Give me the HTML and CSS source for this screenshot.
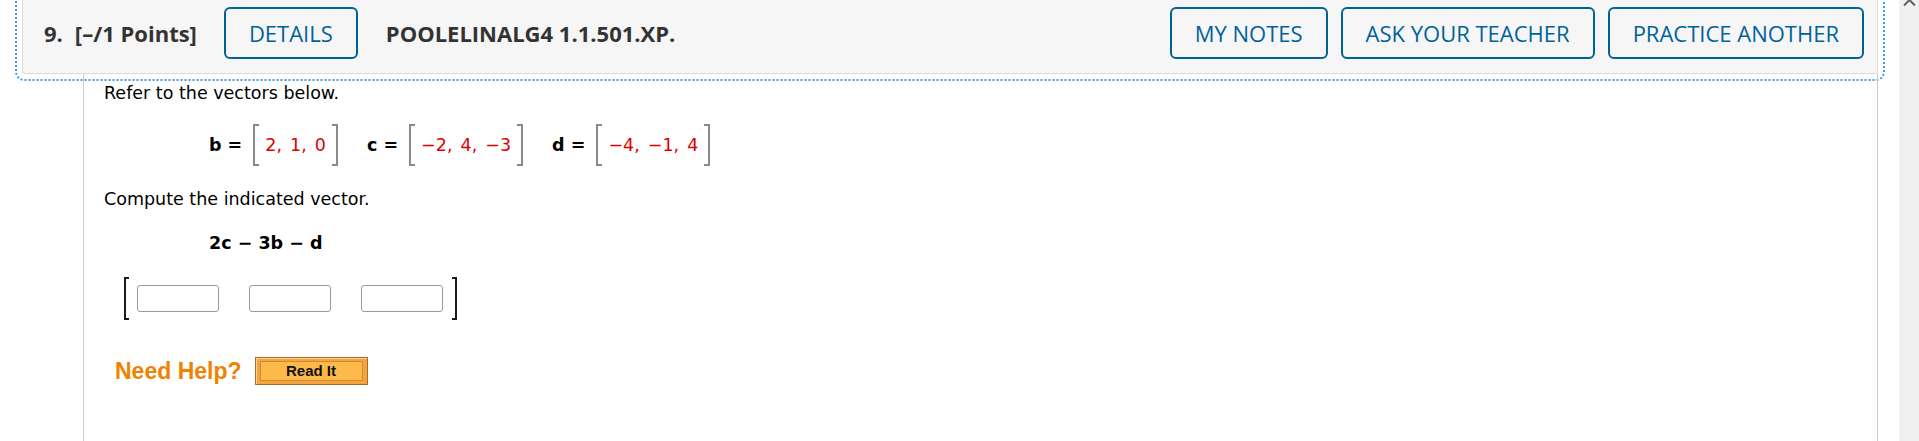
FILE: index.html
```html
<!DOCTYPE html>
<html lang="en">
<head>
    <meta charset="UTF-8">
    <meta name="viewport" content="width=device-width, initial-scale=1.0">
    <title>Question 9</title>
    <link rel="stylesheet" href="styles.css">
</head>
<body>
    <div class="page">
        <!-- Question header bar -->
        <div class="question-header">
            <div class="question-title">
                <span class="question-number">9.</span>
                <span class="question-points">[&ndash;/1 Points]</span>
                <button class="header-button">DETAILS</button>
                <span class="question-code">POOLELINALG4 1.1.501.XP.</span>
            </div>
            <div class="header-actions">
                <button class="header-button">MY NOTES</button>
                <button class="header-button">ASK YOUR TEACHER</button>
                <button class="header-button">PRACTICE ANOTHER</button>
            </div>
        </div>

        <!-- Question body -->
        <div class="question-body">
            <p class="prompt">Refer to the vectors below.</p>

            <div class="vector-row">
                <span class="vector-label">b =</span>
                <span class="bracket bracket-left"></span>
                <span class="vector-values">2, 1, 0</span>
                <span class="bracket bracket-right"></span>

                <span class="vector-label">c =</span>
                <span class="bracket bracket-left"></span>
                <span class="vector-values">&minus;2, 4, &minus;3</span>
                <span class="bracket bracket-right"></span>

                <span class="vector-label">d =</span>
                <span class="bracket bracket-left"></span>
                <span class="vector-values">&minus;4, &minus;1, 4</span>
                <span class="bracket bracket-right"></span>
            </div>

            <p class="prompt prompt-second">Compute the indicated vector.</p>

            <div class="expression">2c &minus; 3b &minus; d</div>

            <div class="answer-row">
                <span class="answer-bracket answer-bracket-left"></span>
                <input type="text" class="answer-input">
                <input type="text" class="answer-input">
                <input type="text" class="answer-input">
                <span class="answer-bracket answer-bracket-right"></span>
            </div>

            <div class="help-row">
                <span class="need-help">Need Help?</span>
                <button class="read-it"><span>Read It</span></button>
            </div>
        </div>
    </div>

    <!-- Window scrollbar -->
    <div class="scrollbar">
        <svg width="20" height="8" viewBox="0 0 20 8">
            <polyline points="5,7.5 10.5,2 16,7.5" fill="none" stroke="#5f5f5f" stroke-width="2"/>
        </svg>
    </div>
</body>
</html>
```

FILE: styles.css
```css
body {
    margin: 0;
    height: 100vh;
    display: flex;
    background-color: white;
    overflow: hidden;
}

.page {
    flex: 1;
    display: flex;
    flex-direction: column;
    padding: 0 21px 0 22px;
}

.question-header {
    display: flex;
    align-items: center;
    justify-content: space-between;
    padding: 7px 13px 14px 21px;
    background-color: #f6f6f6;
    border: 1px solid #dcdcdc;
    border-top: none;
    border-radius: 0 0 2px 2px;
    outline: 2px dotted #3f9be8;
    outline-offset: 5px;
    font-family: "Open Sans", sans-serif;
    font-size: 22px;
    color: #333333;
}

.question-title {
    display: flex;
    align-items: center;
}

.question-number {
    font-weight: bold;
    margin-right: 12px;
}

.question-points {
    font-weight: bold;
    margin-right: 27px;
}

.question-code {
    font-weight: bold;
    margin-left: 28px;
}

.header-actions {
    display: flex;
    gap: 13px;
}

.header-button {
    height: 52px;
    padding: 0 23px;
    background-color: transparent;
    border: 2px solid #00629b;
    border-radius: 6px;
    font-family: "Open Sans", sans-serif;
    font-size: 22px;
    color: #00629b;
}

.question-body {
    flex: 1;
    margin-left: 61px;
    padding: 9px 0 0 20px;
    border-left: 1px solid #cccccc;
    border-right: 1px solid #cccccc;
    font-family: "DejaVu Sans", Verdana, sans-serif;
    font-size: 17.5px;
    color: black;
}

.prompt {
    margin: 0;
    line-height: 21px;
}

.prompt-second {
    margin-top: 24px;
}

.vector-row {
    display: flex;
    align-items: center;
    height: 40px;
    margin-top: 21px;
    padding-left: 105px;
}

.vector-label {
    font-weight: bold;
    margin-right: 11px;
    white-space: pre;
}

.vector-values {
    color: #dd0000;
    padding: 0 6px;
    word-spacing: 2.5px;
}

.bracket {
    width: 4px;
    height: 38px;
    border: 2px solid #8a8a8a;
}

.bracket-left {
    border-right: none;
}

.bracket-right {
    border-left: none;
    margin-right: 29px;
}

.expression {
    margin-top: 23px;
    padding-left: 105px;
    line-height: 21px;
    font-weight: bold;
}

.answer-row {
    display: flex;
    align-items: center;
    gap: 30px;
    margin-top: 23px;
    padding-left: 20px;
}

.answer-bracket {
    width: 3px;
    height: 39px;
    border: 2px solid #1a1a1a;
}

.answer-bracket-left {
    border-right: none;
    margin-right: -22px;
}

.answer-bracket-right {
    border-left: none;
    margin-left: -21px;
}

.answer-input {
    box-sizing: border-box;
    width: 82px;
    height: 27px;
    margin: 0;
    padding: 0 4px;
    border: 1px solid #9a9aa6;
    border-radius: 3px;
    background-color: white;
}

.help-row {
    display: flex;
    align-items: center;
    margin-top: 37px;
    padding-left: 11px;
}

.need-help {
    font-family: "Liberation Sans", Arial, sans-serif;
    font-size: 23px;
    font-weight: bold;
    color: #ef8200;
    margin-right: 13px;
}

.read-it {
    box-sizing: border-box;
    width: 113px;
    height: 28px;
    padding: 3px 4px;
    border: 1px solid #a86b2b;
    background-color: #f6a43a;
    box-shadow: inset 1px 1px 0 #fcd49a;
}

.read-it span {
    display: block;
    height: 20px;
    box-sizing: border-box;
    border: 1px solid #d08a33;
    background-color: #fdb94a;
    font-family: "Liberation Sans", Arial, sans-serif;
    font-size: 15px;
    font-weight: bold;
    line-height: 18px;
    color: #111111;
}

.scrollbar {
    width: 20px;
    background-color: #f0f0f0;
}

.scrollbar svg {
    display: block;
    margin-top: -2px;
}
```
